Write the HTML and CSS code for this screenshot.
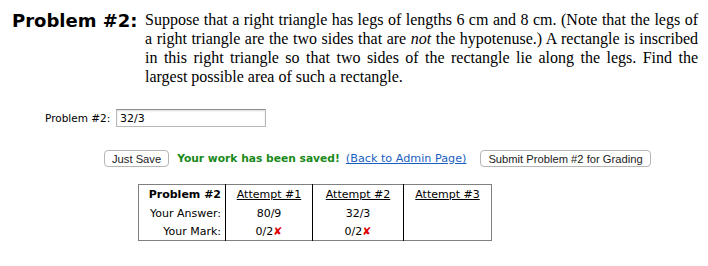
FILE: index.html
```html
<!DOCTYPE html>
<html lang="en">
<head>
    <meta charset="UTF-8">
    <title>Problem #2</title>
    <link rel="stylesheet" href="styles.css">
</head>
<body>

    <!-- Problem statement -->
    <div class="problem">
        <div class="problem-title">Problem #2:</div>
        <div class="problem-text">
            Suppose that a right triangle has legs of lengths 6 cm and 8 cm. (Note that the legs of
            a right triangle are the two sides that are <i>not</i> the hypotenuse.) A rectangle is inscribed
            in this right triangle so that two sides of the rectangle lie along the legs. Find the
            largest possible area of such a rectangle.
        </div>
    </div>

    <!-- Answer box -->
    <div class="answer-row">
        <label for="answer">Problem #2:</label>
        <input id="answer" type="text" value="32/3">
    </div>

    <!-- Save / submit -->
    <div class="actions">
        <button class="btn">Just Save</button>
        <span class="saved">Your work has been saved!</span>
        <a href="#" class="back">(Back to Admin Page)</a>
        <button class="btn submit">Submit Problem #2 for Grading</button>
    </div>

    <!-- Attempts -->
    <table class="attempts">
        <colgroup>
            <col style="width: 87px">
            <col style="width: 87px">
            <col style="width: 91px">
            <col style="width: 88px">
        </colgroup>
        <tr>
            <th class="rowhead">Problem #2</th>
            <td><a href="#">Attempt #1</a></td>
            <td><a href="#">Attempt #2</a></td>
            <td><a href="#">Attempt #3</a></td>
        </tr>
        <tr>
            <td class="rowhead">Your Answer:</td>
            <td>80/9</td>
            <td>32/3</td>
            <td></td>
        </tr>
        <tr>
            <td class="rowhead">Your Mark:</td>
            <td>0/2<span class="wrong">&#x2718;</span></td>
            <td>0/2<span class="wrong">&#x2718;</span></td>
            <td></td>
        </tr>
    </table>

</body>
</html>
```

FILE: styles.css
```css
body {
    margin: 0;
    padding: 10px 0 0 0;
    background: #fff;
    color: #000;
    font-family: "DejaVu Sans", Verdana, sans-serif;
    font-size: 11px;
}

/* Problem statement */
.problem {
    display: flex;
    align-items: flex-start;
}

.problem-title {
    width: 133px;
    padding-left: 12px;
    font-size: 18px;
    font-weight: bold;
    line-height: 19px;
    padding-top: 1px;
    white-space: nowrap;
}

.problem-text {
    width: 553px;
    font-family: "Liberation Serif", "Times New Roman", serif;
    font-size: 16px;
    line-height: 19px;
    text-align: justify;
}

/* Answer row */
.answer-row {
    display: flex;
    align-items: center;
    margin: 23px 0 0 45px;
}

.answer-row label {
    width: 71px;
    font-size: 10.5px;
}

.answer-row input {
    width: 142px;
    height: 14px;
    padding: 1px 3px;
    border: 1px solid #b9b9b9;
    border-top-color: #8f8f8f;
    box-shadow: inset 0 1px 2px rgba(0, 0, 0, 0.15);
    font-family: "DejaVu Sans", Verdana, sans-serif;
    font-size: 11px;
}

/* Buttons */
.actions {
    display: flex;
    align-items: center;
    margin: 23px 0 0 104px;
}

.btn {
    height: 17px;
    padding: 0 7px;
    background: #fff;
    border: 1px solid #b5b5b5;
    border-radius: 4px;
    font-family: "Liberation Sans", Arial, sans-serif;
    font-size: 11.2px;
    color: #222;
}

.saved {
    margin-left: 8px;
    color: #1a8a1a;
    font-weight: bold;
    font-size: 10.7px;
}

.back {
    margin-left: 6px;
    color: #1a5fbf;
    font-size: 11.2px;
}

.submit {
    margin-left: 14px;
}

/* Attempts table */
.attempts {
    margin: 17px 0 0 138px;
    width: 353px;
    table-layout: fixed;
    border: 1px solid #808080;
    border-collapse: collapse;
}

.attempts th,
.attempts td {
    height: 18px;
    padding: 0 4px;
    text-align: center;
    border-left: 1px solid #000;
    font-weight: normal;
}

.attempts tr:first-child td,
.attempts tr:first-child th {
    height: 19px;
}

.attempts .rowhead {
    text-align: right;
    border-left: none;
}

.attempts th.rowhead {
    font-weight: bold;
}

.attempts a {
    color: #000;
}

.wrong {
    color: #e00000;
    font-weight: bold;
}
```
